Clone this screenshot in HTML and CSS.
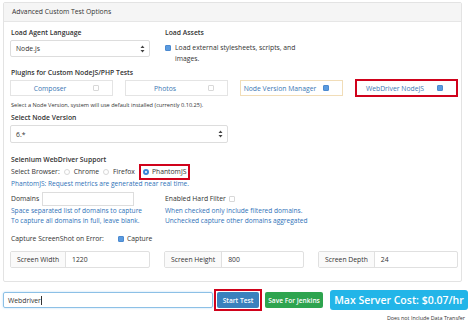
FILE: index.html
```html
<!DOCTYPE html>
<html lang="en">
<head>
    <meta charset="UTF-8">
    <title>Advanced Custom Test Options</title>
    <link rel="stylesheet" href="styles.css">
</head>
<body>
    <div class="panel">
        <div class="panel-heading">Advanced Custom Test Options</div>
        <div class="panel-body">
            <div class="grid top-row">
                <div>
                    <div class="label">Load Agent Language</div>
                    <div class="select">
                        <span>Node.js</span>
                        <svg class="arrows" width="5" height="8" viewBox="0 0 5 8"><path d="M0.5 3 L2.5 0.5 L4.5 3 Z M0.5 5 L2.5 7.5 L4.5 5 Z" fill="#444"/></svg>
                    </div>
                </div>
                <div class="span2">
                    <div class="label">Load Assets</div>
                    <div class="check-line">
                        <span class="cb on"></span>
                        <span>Load external stylesheets, scripts, and<br>images.</span>
                    </div>
                </div>
            </div>

            <div class="label plugins-label">Plugins for Custom NodeJS/PHP Tests</div>
            <div class="plugins">
                <div class="plugin"><span class="plugin-name">Composer</span><span class="cb"></span></div>
                <div class="plugin"><span class="plugin-name">Photos</span><span class="cb"></span></div>
                <div class="plugin nvm"><span class="plugin-name">Node Version Manager</span><span class="cb on"></span></div>
                <div class="plugin marked"><span class="plugin-name">WebDriver NodeJS</span><span class="cb on"></span></div>
            </div>
            <div class="note">Select a Node Version, system will use default installed (currently 0.10.25).</div>

            <div class="label node-label">Select Node Version</div>
            <div class="select half">
                <span>6.*</span>
                <svg class="arrows" width="5" height="8" viewBox="0 0 5 8"><path d="M0.5 3 L2.5 0.5 L4.5 3 Z M0.5 5 L2.5 7.5 L4.5 5 Z" fill="#444"/></svg>
            </div>

            <div class="label selenium-label">Selenium WebDriver Support</div>
            <div class="browser-row">
                <span class="plain">Select Browser:</span>
                <span class="radio"></span><span class="plain">Chrome</span>
                <span class="radio"></span><span class="plain">Firefox</span>
                <span class="marked-radio"><span class="radio on"></span><span class="plain">PhantomJS</span></span>
            </div>
            <div class="info">PhantomJS: Request metrics are generated near real time.</div>

            <div class="grid domains-row">
                <div>
                    <div class="inline-field">
                        <span class="plain">Domains</span>
                        <span class="text-input"></span>
                    </div>
                    <div class="info two">Space separated list of domains to capture<br>To capture all domains in full, leave blank.</div>
                </div>
                <div class="span2">
                    <div class="inline-field">
                        <span class="plain">Enabled Hard Filter</span>
                        <span class="cb"></span>
                    </div>
                    <div class="info two">When checked only include filtered domains.<br>Unchecked capture other domains aggregated</div>
                </div>
            </div>

            <div class="capture-row">
                <span class="plain">Capture ScreenShot on Error:</span>
                <span class="cb on"></span><span class="plain">Capture</span>
            </div>

            <div class="grid screen-row">
                <div class="input-group"><span class="addon">Screen Width</span><span class="value">1220</span></div>
                <div class="input-group"><span class="addon">Screen Height</span><span class="value">800</span></div>
                <div class="input-group"><span class="addon">Screen Depth</span><span class="value">24</span></div>
            </div>
        </div>
    </div>

    <div class="action-bar">
        <div class="name-input">Webdriver<span class="caret"></span></div>
        <div class="start-wrap"><button class="btn btn-start">Start Test</button></div>
        <button class="btn btn-jenkins">Save For Jenkins</button>
        <div class="cost">Max Server Cost: $0.07/hr</div>
    </div>
    <div class="cost-note">Does not Include Data Transfer</div>
</body>
</html>
```

FILE: styles.css
```css
body {
    font-family: "Open Sans", "Liberation Sans", sans-serif;
    margin: 0;
    padding: 0;
    background-color: #fff;
    color: #333;
    font-size: 6.8px;
}
.panel {
    margin: 2px 0 0 3px;
    width: 459px;
    border: 1px solid #e3e3e3;
    border-radius: 2px;
    box-sizing: border-box;
}
.panel-heading {
    height: 18px;
    line-height: 18px;
    padding-left: 8px;
    background-color: #f5f5f5;
    border-bottom: 1px solid #e6e6e6;
}
.panel-body {
    padding: 6px 5px 13px 6px;
}
.grid {
    display: grid;
    grid-template-columns: 140px 140px 140px;
    column-gap: 14px;
}
.span2 {
    grid-column: span 2;
}
.label {
    font-weight: 600;
    line-height: 10px;
    padding-left: 1px;
}
.plain {
    line-height: 10px;
}
.select {
    display: flex;
    align-items: center;
    justify-content: space-between;
    margin-top: 2px;
    height: 17px;
    padding: 0 4px 0 5px;
    border: 1px solid #ddd;
    border-radius: 2px;
    box-sizing: border-box;
}
.select.half {
    width: 218px;
    height: 18px;
}
.check-line {
    display: flex;
    align-items: flex-start;
    margin-top: 4px;
    line-height: 11px;
    padding-left: 1px;
}
.check-line .cb {
    margin: 3px 4px 0 0;
}
.cb {
    display: inline-block;
    width: 4px;
    height: 4px;
    border: 1px solid #d8d8d8;
    border-radius: 1px;
    background-color: #fff;
    flex-shrink: 0;
}
.cb.on {
    background-color: #5a9be0;
    border-color: #4c8ad0;
}
.plugins-label {
    margin-top: 4px;
}
.plugins {
    display: grid;
    grid-template-columns: repeat(4, 103px);
    column-gap: 12px;
    margin-top: 2px;
}
.plugin {
    display: flex;
    align-items: center;
    height: 16px;
    border: 1px solid #e4e4e4;
    box-sizing: border-box;
    color: #3c78b4;
}
.plugin-name {
    flex: 1;
    text-align: center;
    padding-left: 2px;
}
.plugin .cb {
    margin: 0 13px 0 6px;
}
.plugin.nvm {
    border-color: #f1ddb8;
}
.plugin.marked {
    height: 18px;
    margin-top: -1px;
    border: 2px solid #d0021b;
}
.note {
    margin-top: 4px;
    font-size: 5.6px;
    line-height: 8px;
    padding-left: 1px;
}
.node-label {
    margin-top: 4px;
}
.selenium-label {
    margin-top: 12px;
}
.browser-row {
    display: flex;
    align-items: center;
    height: 14px;
    margin-top: 0;
    padding-left: 1px;
}
.browser-row .radio {
    margin: 0 4px 0 4px;
}
.browser-row .radio:first-of-type {
    margin-left: 2px;
}
.radio {
    display: inline-block;
    width: 4px;
    height: 4px;
    border: 1px solid #d8d8d8;
    border-radius: 50%;
    background-color: #fff;
    box-sizing: content-box;
}
.radio.on {
    width: 2px;
    height: 2px;
    border: 2px solid #3a86d8;
}
.marked-radio {
    display: inline-flex;
    align-items: center;
    height: 12px;
    margin-left: 4px;
    padding: 0 2px 0 0;
    border: 2px solid #d0021b;
}
.marked-radio .radio {
    margin: 0 3px 0 3px;
}
.info {
    color: #2f72b8;
    font-size: 6.6px;
    line-height: 9px;
    padding-left: 1px;
}
.info.two {
    line-height: 10px;
}
.domains-row {
    margin-top: 4px;
}
.inline-field {
    display: flex;
    align-items: center;
    height: 14px;
    padding-left: 1px;
}
.text-input {
    display: inline-block;
    width: 92px;
    height: 14px;
    margin-left: 3px;
    border: 1px solid #ddd;
    box-sizing: border-box;
}
.inline-field .cb {
    margin-left: 3px;
}
.capture-row {
    display: flex;
    align-items: center;
    height: 10px;
    margin-top: 8px;
    padding-left: 1px;
}
.capture-row .cb {
    margin: 0 3px 0 14px;
}
.screen-row {
    margin-top: 7px;
}
.input-group {
    display: flex;
    height: 17px;
    border: 1px solid #e0e0e0;
    border-radius: 2px;
    box-sizing: border-box;
}
.addon {
    display: flex;
    align-items: center;
    padding: 0 6px;
    background-color: #fafafa;
    border-right: 1px solid #e0e0e0;
}
.value {
    display: flex;
    align-items: center;
    padding-left: 6px;
}
.action-bar {
    display: flex;
    align-items: center;
    margin: 7px 0 0 3px;
    height: 22px;
}
.name-input {
    display: flex;
    align-items: center;
    width: 210px;
    height: 16px;
    padding-left: 4px;
    border: 1px solid #8cc0e6;
    border-radius: 2px;
    box-sizing: border-box;
    box-shadow: 0 0 2px rgba(102, 175, 233, 0.5);
}
.caret {
    display: inline-block;
    width: 1px;
    height: 9px;
    background-color: #333;
}
.start-wrap {
    margin-left: 1px;
    padding: 1px;
    border: 2px solid #d0021b;
}
.btn {
    font-family: "Open Sans", "Liberation Sans", sans-serif;
    font-size: 6.6px;
    font-weight: 600;
    color: #fff;
    border: none;
    border-radius: 2px;
    height: 16px;
    cursor: pointer;
}
.btn-start {
    display: block;
    width: 42px;
    padding: 0;
    background-color: #3a81bd;
}
.btn-jenkins {
    width: 58px;
    margin-left: 3px;
    padding: 0;
    background-color: #2ea44f;
}
.cost {
    display: flex;
    align-items: center;
    justify-content: center;
    width: 138px;
    height: 20px;
    margin-left: 7px;
    border-radius: 3px;
    background-color: #22b5e8;
    color: #fff;
    font-size: 10.5px;
    font-weight: 600;
}
.cost-note {
    width: 465px;
    text-align: right;
    font-size: 5.4px;
    line-height: 10px;
    margin-top: 2px;
}
```
